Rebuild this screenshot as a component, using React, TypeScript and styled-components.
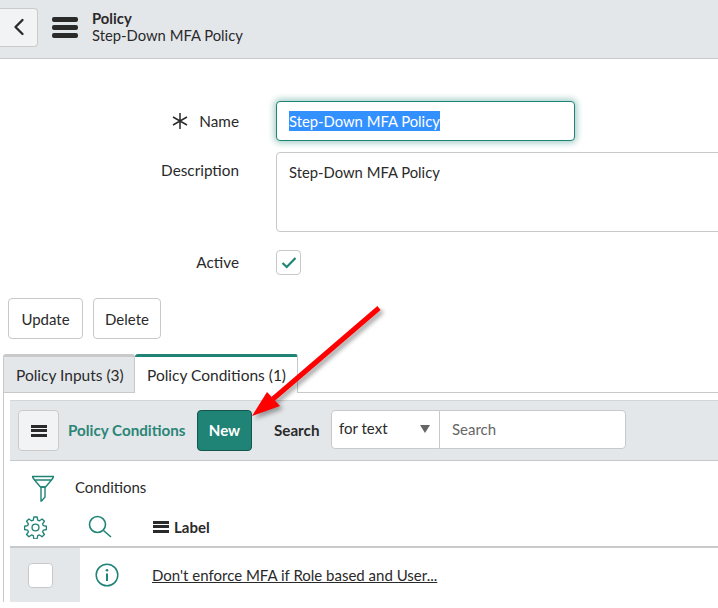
import React from 'react';
import styled, { createGlobalStyle } from 'styled-components';
import { ChevronLeft } from 'lucide-react';

const GlobalStyle = createGlobalStyle`
  html, body {
    margin: 0;
    padding: 0;
    width: 718px;
    height: 608px;
    overflow: hidden;
    background: #fff;
  }
  body {
    font-family: Lato, "Open Sans", sans-serif;
    font-size: 15px;
    color: #2a2a2a;
  }
`;

const App: React.FC = () => {
  return (
    <Page>
      <GlobalStyle />
      <Header>
        <BackButton>
          <ChevronLeft size={28} strokeWidth={2} color="#2a2a2a" />
        </BackButton>
        <HeaderMenu>
          <span />
          <span />
          <span />
        </HeaderMenu>
        <HeaderTitle>
          <strong>Policy</strong>
          <div>Step-Down MFA Policy</div>
        </HeaderTitle>
      </Header>

      <Form>
        <FormRow $height={39}>
          <Label>
            <Asterisk viewBox="0 0 16 16">
              <path d="M8 0v16M1 4l14 8M15 4L1 12" stroke="#2a2a2a" strokeWidth="1.5" fill="none" />
            </Asterisk>
            Name
          </Label>
          <NameInput>
            <Selected>Step-Down MFA Policy</Selected>
          </NameInput>
        </FormRow>
        <FormRow $height={80}>
          <Label $alignTop>Description</Label>
          <DescriptionBox>Step-Down MFA Policy</DescriptionBox>
        </FormRow>
        <FormRow $height={25}>
          <Label>Active</Label>
          <CheckBox>
            <svg width="16" height="13" viewBox="0 0 16 13">
              <path d="M1.5 7l4.2 4L14.5 2" stroke="#1f8476" strokeWidth="2.2" fill="none" />
            </svg>
          </CheckBox>
        </FormRow>
      </Form>

      <Actions>
        <ActionButton $width={75}>Update</ActionButton>
        <ActionButton $width={68}>Delete</ActionButton>
      </Actions>

      <Tabs>
        <Tab $width={132}>Policy Inputs (3)</Tab>
        <Tab $width={163} $active>Policy Conditions (1)</Tab>
        <TabFiller />
      </Tabs>

      <Panel>
        <Toolbar>
          <MenuButton>
            <ListIcon $size={16} />
          </MenuButton>
          <ToolbarTitle>Policy Conditions</ToolbarTitle>
          <NewButton>New</NewButton>
          <SearchLabel>Search</SearchLabel>
          <SearchGroup>
            <SelectBox>
              for text
              <Caret />
            </SelectBox>
            <SearchInput>Search</SearchInput>
          </SearchGroup>
        </Toolbar>

        <ConditionsRow>
          <svg width="24" height="27" viewBox="0 0 24 27">
            <path d="M1 1.5h22M1.5 2l2 3h17l2-3M3.5 5l6 7h5l6-7" stroke="#1f8476" strokeWidth="1.4" fill="none" />
            <path d="M10 12h4v10l-3.5 4H10z" stroke="#1f8476" strokeWidth="1.4" fill="none" />
          </svg>
          <ConditionsText>Conditions</ConditionsText>
        </ConditionsRow>

        <ColumnHeader>
          <GearCell>
            <svg width="23" height="23" viewBox="0 0 24 24" fill="none" stroke="#1f8476" strokeWidth="1.4" strokeLinejoin="round">
              <circle cx="12" cy="12" r="3.6" />
              <path d="M10.3 1h3.4l.6 3.2 1.9.8 2.7-1.9 2.4 2.4-1.9 2.7.8 1.9 3.2.6v3.4l-3.2.6-.8 1.9 1.9 2.7-2.4 2.4-2.7-1.9-1.9.8-.6 3.2h-3.4l-.6-3.2-1.9-.8-2.7 1.9-2.4-2.4 1.9-2.7-.8-1.9-3.2-.6v-3.4l3.2-.6.8-1.9-1.9-2.7 2.4-2.4 2.7 1.9 1.9-.8z" />
            </svg>
          </GearCell>
          <SearchCell>
            <svg width="24" height="24" viewBox="0 0 24 24" fill="none" stroke="#1f8476" strokeWidth="1.6">
              <circle cx="9.5" cy="9.5" r="8" />
              <path d="M15.5 15.5l7.5 6.5" />
            </svg>
          </SearchCell>
          <LabelHead>
            <ListIcon $size={16} />
            Label
          </LabelHead>
        </ColumnHeader>

        <DataRow>
          <SelectCell>
            <RowCheck />
          </SelectCell>
          <InfoCell>
            <svg width="24" height="24" viewBox="0 0 24 24" fill="none">
              <circle cx="12" cy="12" r="10.8" stroke="#1f8476" strokeWidth="1.5" />
              <path d="M12 10.5v7.5" stroke="#1f8476" strokeWidth="2" />
              <circle cx="12" cy="7.2" r="1.3" fill="#1f8476" />
            </svg>
          </InfoCell>
          <RowLink>Don't enforce MFA if Role based and User...</RowLink>
        </DataRow>
      </Panel>

      <Arrow width="150" height="130" viewBox="0 0 150 130">
        <path d="M129 5L23 96" stroke="#ff0000" strokeWidth="5" fill="none" />
        <path d="M2 113L17 89L30 103z" fill="#ff0000" />
      </Arrow>
    </Page>
  );
};

const Page = styled.div`
  position: relative;
  width: 718px;
  height: 608px;
  overflow: hidden;
`;

const Header = styled.div`
  display: flex;
  align-items: center;
  height: 59px;
  box-sizing: border-box;
  padding-bottom: 4px;
  background: #e4e7ea;
  border-bottom: 1px solid #c9c9c9;
`;

const BackButton = styled.div`
  display: flex;
  align-items: center;
  justify-content: center;
  width: 38px;
  height: 39px;
  box-sizing: border-box;
  background: #f2f3f5;
  border: 1px solid #cbcbcb;
  border-left: none;
  border-radius: 0 4px 4px 0;
`;

const HeaderMenu = styled.div`
  display: flex;
  flex-direction: column;
  gap: 3.5px;
  width: 26px;
  margin-left: 14px;
  margin-top: 1px;
  span {
    display: block;
    height: 4.5px;
    border-radius: 2px;
    background: #2a2a2a;
  }
`;

const HeaderTitle = styled.div`
  margin-left: 14px;
  font-size: 14.8px;
  line-height: 17px;
  strong {
    font-weight: 700;
  }
`;

const Form = styled.div`
  display: flex;
  flex-direction: column;
  gap: 12px;
  padding-top: 42px;
`;

const FormRow = styled.div<{ $height: number }>`
  display: grid;
  grid-template-columns: 239px 1fr;
  column-gap: 37px;
  height: ${({ $height }) => $height}px;
  &:last-child {
    margin-top: 6px;
  }
`;

const Label = styled.div<{ $alignTop?: boolean }>`
  display: flex;
  align-items: ${({ $alignTop }) => ($alignTop ? 'flex-start' : 'center')};
  justify-content: flex-end;
  gap: 11px;
  margin-top: -1px;
  padding-top: ${({ $alignTop }) => ($alignTop ? '10px' : '0')};
  font-size: 15.3px;
  line-height: 18px;
`;

const Asterisk = styled.svg`
  width: 16px;
  height: 16px;
`;

const NameInput = styled.div`
  display: flex;
  align-items: center;
  box-sizing: border-box;
  width: 299px;
  height: 40px;
  padding-left: 12px;
  font-size: 14.8px;
  background: #fff;
  border: 1px solid #1f8476;
  border-radius: 4px;
  box-shadow: 0 0 6px 2px rgba(31, 132, 118, 0.4);
`;

const Selected = styled.span`
  background: #3390ff;
  color: #fff;
  line-height: 20px;
`;

const DescriptionBox = styled.div`
  box-sizing: border-box;
  height: 80px;
  margin-right: -20px;
  padding: 9px 12px;
  font-size: 14.8px;
  line-height: 20px;
  background: #fff;
  border: 1px solid #c9c9c9;
  border-radius: 4px;
`;

const CheckBox = styled.div`
  display: flex;
  align-items: center;
  justify-content: center;
  box-sizing: border-box;
  width: 25px;
  height: 25px;
  background: #fff;
  border: 1px solid #c9c9c9;
  border-radius: 4px;
`;

const Actions = styled.div`
  display: flex;
  gap: 10px;
  margin: 23px 0 0 8px;
`;

const ActionButton = styled.div<{ $width: number }>`
  display: flex;
  align-items: center;
  justify-content: center;
  width: ${({ $width }) => $width}px;
  height: 41px;
  box-sizing: border-box;
  background: #fff;
  border: 1px solid #c9c9c9;
  border-radius: 4px;
`;

const Tabs = styled.div`
  display: flex;
  align-items: stretch;
  height: 39px;
  margin: 15px 0 0 3px;
`;

const Tab = styled.div<{ $active?: boolean; $width: number }>`
  display: flex;
  align-items: center;
  box-sizing: border-box;
  width: ${({ $width }) => $width}px;
  padding: 0 12px;
  font-size: 15.5px;
  white-space: nowrap;
  background: ${({ $active }) => ($active ? '#fff' : '#e4e7ea')};
  border-top: 3px solid ${({ $active }) => ($active ? '#1f8476' : '#c9c9c9')};
  border-right: 1px solid #c9c9c9;
  border-left: ${({ $active }) => ($active ? 'none' : '1px solid #c9c9c9')};
  border-bottom: ${({ $active }) => ($active ? 'none' : '1px solid #c9c9c9')};
  border-radius: 3px 3px 0 0;
`;

const TabFiller = styled.div`
  flex: 1;
  border-bottom: 1px solid #c9c9c9;
`;

const Panel = styled.div`
  margin-left: 3px;
  padding: 7px 0 0 6px;
  border-left: 1px solid #c9c9c9;
`;

const Toolbar = styled.div`
  display: flex;
  align-items: center;
  height: 61px;
  box-sizing: border-box;
  padding-left: 8px;
  background: #e4e7ea;
  border-top: 1px solid #d5d5d5;
  border-bottom: 1px solid #c9c9c9;
`;

const MenuButton = styled.div`
  display: flex;
  align-items: center;
  justify-content: center;
  width: 41px;
  height: 41px;
  box-sizing: border-box;
  background: #f2f3f5;
  border: 1px solid #cbcbcb;
  border-radius: 4px;
`;

const ListIcon = styled.span<{ $size: number }>`
  display: inline-block;
  flex: none;
  width: ${({ $size }) => $size}px;
  height: 12px;
  background: linear-gradient(#2a2a2a 0 3px, transparent 3px 4.5px, #2a2a2a 4.5px 7.5px, transparent 7.5px 9px, #2a2a2a 9px 12px);
`;

const ToolbarTitle = styled.div`
  width: 118px;
  margin-left: 9px;
  padding-bottom: 2px;
  font-weight: 700;
  font-size: 15.2px;
  white-space: nowrap;
  color: #2a8577;
`;

const NewButton = styled.div`
  display: flex;
  align-items: center;
  justify-content: center;
  width: 55px;
  height: 41px;
  margin-left: 11px;
  padding-bottom: 2px;
  box-sizing: border-box;
  font-weight: 700;
  color: #fff;
  background: #1f8476;
  border: 1px solid #14564d;
  border-radius: 4px;
`;

const SearchLabel = styled.div`
  width: 46px;
  margin-left: 22px;
  padding-bottom: 2px;
  font-size: 15.2px;
  font-weight: 700;
`;

const SearchGroup = styled.div`
  display: flex;
  height: 39px;
  margin: -3px 0 0 11px;
`;

const SelectBox = styled.div`
  position: relative;
  display: flex;
  align-items: center;
  width: 109px;
  box-sizing: border-box;
  padding: 0 7px 2px;
  margin-right: -1px;
  background: #fff;
  border: 1px solid #c9c9c9;
  border-radius: 4px 0 0 4px;
`;

const Caret = styled.span`
  position: absolute;
  right: 9px;
  top: 14px;
  border-left: 5.5px solid transparent;
  border-right: 5.5px solid transparent;
  border-top: 8px solid #666;
`;

const SearchInput = styled.div`
  display: flex;
  align-items: center;
  width: 187px;
  box-sizing: border-box;
  padding: 0 12px;
  color: #666;
  background: #fff;
  border: 1px solid #c9c9c9;
  border-radius: 0 4px 4px 0;
`;

const ConditionsRow = styled.div`
  display: flex;
  align-items: center;
  gap: 20px;
  height: 27px;
  margin: 14px 0 0 21px;
`;

const ConditionsText = styled.span`
  margin-top: -3px;
`;

const ColumnHeader = styled.div`
  display: flex;
  align-items: center;
  height: 33px;
  margin-top: 11px;
  border-bottom: 2px solid #c9c9c9;
`;

const GearCell = styled.div`
  display: flex;
  width: 64px;
  padding-left: 14px;
  box-sizing: border-box;
  margin-top: -5px;
`;

const SearchCell = styled.div`
  display: flex;
  width: 79px;
  padding-left: 14px;
  box-sizing: border-box;
  margin-top: -5px;
`;

const LabelHead = styled.div`
  display: flex;
  align-items: center;
  gap: 5px;
  margin-top: -5px;
  font-weight: 700;
`;

const DataRow = styled.div`
  display: flex;
  align-items: center;
  height: 54px;
`;

const SelectCell = styled.div`
  display: flex;
  align-items: center;
  width: 70px;
  height: 100%;
  padding-left: 18px;
  box-sizing: border-box;
  background: #e4e7ea;
`;

const RowCheck = styled.div`
  width: 25px;
  height: 25px;
  box-sizing: border-box;
  background: #fff;
  border: 1px solid #c9c9c9;
  border-radius: 4px;
`;

const InfoCell = styled.div`
  display: flex;
  width: 72px;
  padding-left: 15px;
  box-sizing: border-box;
`;

const RowLink = styled.a`
  color: #2a2a2a;
  text-decoration: underline;
`;

const Arrow = styled.svg`
  position: absolute;
  left: 250px;
  top: 303px;
  filter: drop-shadow(3px 3px 2px rgba(0, 0, 0, 0.35));
`;

export default App;
